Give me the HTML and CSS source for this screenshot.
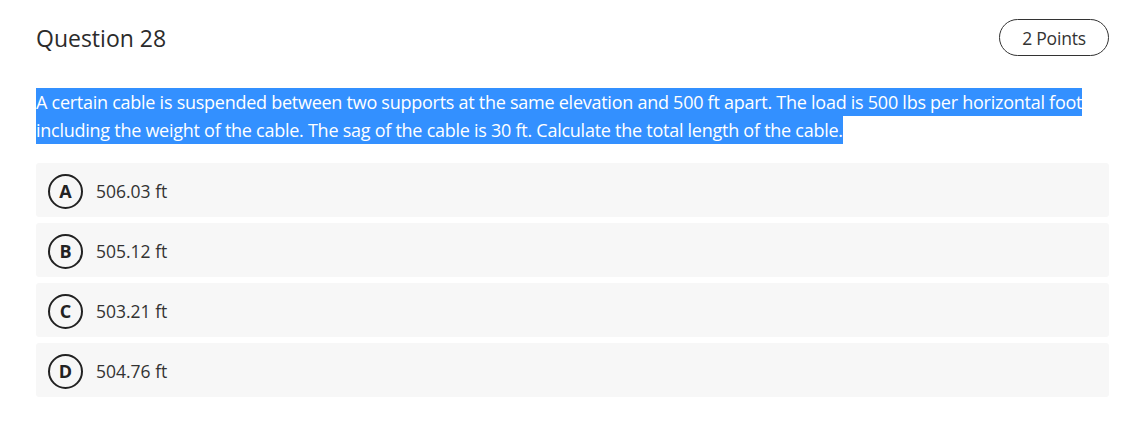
FILE: index.html
```html
<!DOCTYPE html>
<html lang="en">
  <head>
    <meta charset="UTF-8" />
    <meta name="viewport" content="width=device-width, initial-scale=1.0" />
    <title>Question 28</title>
    <link rel="stylesheet" href="styles.css">
  </head>
  <body>
    <div class="question">
      <div class="question-header">
        <h2>Question 28</h2>
        <span class="points">2 Points</span>
      </div>

      <p class="question-text">
        <span class="selected">A certain cable is suspended between two supports at the same elevation and 500 ft apart. The load is 500 lbs per horizontal foot including the weight of the cable. The sag of the cable is 30 ft. Calculate the total length of the cable.</span>
      </p>

      <div class="choices">
        <div class="choice">
          <span class="letter">A</span>
          <span class="answer">506.03 ft</span>
        </div>
        <div class="choice">
          <span class="letter">B</span>
          <span class="answer">505.12 ft</span>
        </div>
        <div class="choice">
          <span class="letter">C</span>
          <span class="answer">503.21 ft</span>
        </div>
        <div class="choice">
          <span class="letter">D</span>
          <span class="answer">504.76 ft</span>
        </div>
      </div>
    </div>
  </body>
</html>
```

FILE: styles.css
```css
body {
  margin: 0;
  font-family: "Open Sans", "Noto Sans", sans-serif;
  color: #333;
  background: white;
}
.question {
  padding: 19px 30px 20px 36px;
}
.question-header {
  display: flex;
  justify-content: space-between;
  align-items: center;
  height: 37px;
}
h2 {
  margin: 0;
  font-size: 23px;
  font-weight: normal;
  color: #2b2b2b;
}
.points {
  display: flex;
  align-items: center;
  justify-content: center;
  box-sizing: border-box;
  width: 110px;
  height: 37px;
  border: 1px solid #333;
  border-radius: 19px;
  font-size: 17.5px;
  letter-spacing: -0.2px;
}
.question-text {
  margin: 32px 0 0;
  font-size: 18px;
  line-height: 28px;
  letter-spacing: -0.26px;
}
.selected {
  background-color: #3390ff;
  color: white;
  padding: 2px 0;
}
.choices {
  display: flex;
  flex-direction: column;
  gap: 6px;
  margin-top: 19px;
}
.choice {
  display: flex;
  align-items: center;
  gap: 13px;
  height: 54px;
  padding: 2px 12px 0;
  box-sizing: border-box;
  background-color: #f7f7f7;
  border-radius: 3px;
}
.letter {
  display: flex;
  align-items: center;
  justify-content: center;
  box-sizing: border-box;
  width: 35px;
  height: 35px;
  border: 2px solid #222;
  border-radius: 50%;
  font-size: 18px;
  font-weight: bold;
  color: #222;
}
.answer {
  font-size: 17.5px;
}
```
